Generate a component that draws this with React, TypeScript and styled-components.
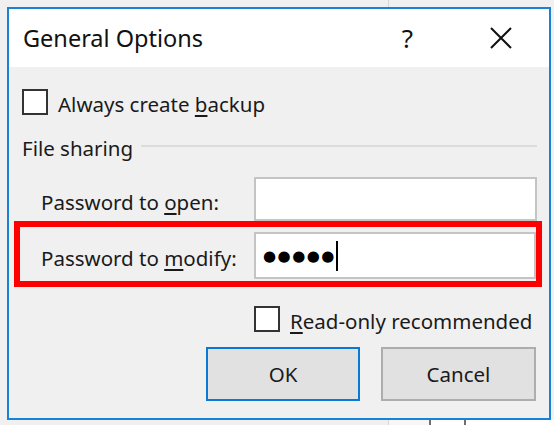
import styled, { createGlobalStyle } from 'styled-components';

const GlobalStyle = createGlobalStyle`
  html, body {
    margin: 0;
    padding: 0;
  }
  body {
    background: #f0f0f0;
    font-family: "Noto Sans", "Open Sans", sans-serif;
    color: #1a1a1a;
  }
`;

// the desktop behind the dialog, with bits of the app peeking out at the edges
const Desktop = styled.div`
  width: 554px;
  height: 425px;
  box-sizing: border-box;
  padding: 7px 3px 5px 7px;
  background-color: #f0f0f0;
  background-image:
    linear-gradient(to right, transparent 388px, #d6d6d6 388px, #d6d6d6 389px, transparent 389px),
    linear-gradient(to right, transparent 388px, #d6d6d6 388px, #d6d6d6 389px, #f7f7f7 389px, #f7f7f7 429px, #707070 429px, #707070 431px, #fff 431px, #fff 464px, #707070 464px, #707070 466px, #fff 466px);
  background-size: 100% 7px, 100% 5px;
  background-position: top left, bottom left;
  background-repeat: no-repeat;
`;

const Window = styled.div`
  width: 544px;
  height: 413px;
  box-sizing: border-box;
  border: 2px solid #1a82d6;
  background: #f0f0f0;
  display: flex;
  flex-direction: column;
`;

const TitleBar = styled.div`
  height: 58px;
  flex-shrink: 0;
  background: #fff;
  display: flex;
  align-items: center;
  padding-left: 14px;
`;

const Title = styled.div`
  flex: 1;
  font-size: 23.5px;
  color: #111;
`;

const HelpButton = styled.div`
  font-size: 26px;
  color: #111;
  margin-right: 77px;
`;

const CloseButton = styled.div`
  width: 22px;
  height: 22px;
  margin-right: 37px;
  display: flex;
  color: #111;
`;

const Body = styled.div`
  flex: 1;
  display: flex;
  flex-direction: column;
  padding-top: 22px;
`;

const CheckRow = styled.label<{ $indent: number; $top?: number }>`
  display: flex;
  align-items: center;
  gap: 10px;
  height: 26px;
  margin-left: ${(p) => p.$indent}px;
  margin-top: ${(p) => p.$top ?? 0}px;
  font-size: 20.5px;

  & > span:last-child {
    padding-top: 3px;
  }
`;

const Box = styled.span`
  width: 26px;
  height: 26px;
  box-sizing: border-box;
  border: 2px solid #333;
  background: #fff;
  flex-shrink: 0;
`;

const Key = styled.u`
  text-decoration-thickness: 2px;
  text-underline-offset: 3px;
`;

const GroupHeader = styled.div`
  display: flex;
  align-items: center;
  gap: 8px;
  height: 24px;
  margin: 21px 12px 0 13px;
  font-size: 20.5px;
`;

const GroupLine = styled.div`
  flex: 1;
  height: 2px;
  background: #dcdcdc;
  margin-bottom: 4px;
`;

const FieldRow = styled.div<{ $highlight?: boolean }>`
  display: flex;
  align-items: center;
  ${(p) =>
    p.$highlight
      ? `
    width: 528px;
    box-sizing: border-box;
    margin-left: 5px;
    border: 6px solid #ff0000;
    padding: 5px 0 2px 21px;
  `
      : `
    margin: 17px 0 0 32px;
  `}
`;

const FieldLabel = styled.div`
  width: 213px;
  font-size: 20.5px;
  padding-top: 5px;
`;

const TextBox = styled.div<{ $width: number; $height: number }>`
  width: ${(p) => p.$width}px;
  height: ${(p) => p.$height}px;
  box-sizing: border-box;
  border: 2px solid #c4c4c4;
  background: #fff;
  display: flex;
  align-items: center;
  padding-left: 7px;
`;

const Dots = styled.span`
  font-family: "DejaVu Sans", sans-serif;
  font-size: 15px;
  letter-spacing: 1.5px;
  color: #000;
`;

const Caret = styled.span`
  width: 2px;
  height: 30px;
  background: #000;
`;

const ButtonRow = styled.div`
  display: flex;
  justify-content: flex-end;
  gap: 21px;
  margin-top: 15px;
  padding-right: 13px;
`;

const Button = styled.button<{ $default?: boolean }>`
  width: ${(p) => (p.$default ? 154 : 155)}px;
  height: 54px;
  box-sizing: border-box;
  border: 2px solid ${(p) => (p.$default ? '#0a78d7' : '#adadad')};
  background: #e1e1e1;
  font-family: "Noto Sans", "Open Sans", sans-serif;
  font-size: 20.5px;
  color: #1a1a1a;
  padding: 0;
`;

export default function App() {
  return (
    <>
      <GlobalStyle />
      <Desktop>
        <Window>
          <TitleBar>
            <Title>General Options</Title>
            <HelpButton>?</HelpButton>
            <CloseButton>
              <svg width="22" height="22" viewBox="0 0 22 22">
                <path d="M1 1 L21 21 M21 1 L1 21" stroke="currentColor" strokeWidth="2" />
              </svg>
            </CloseButton>
          </TitleBar>
          <Body>
            <CheckRow $indent={13}>
              <Box />
              <span>
                Always create <Key>b</Key>ackup
              </span>
            </CheckRow>
            <GroupHeader>
              <span>File sharing</span>
              <GroupLine />
            </GroupHeader>
            <FieldRow>
              <FieldLabel>
                Password to <Key>o</Key>pen:
              </FieldLabel>
              <TextBox $width={283} $height={44} />
            </FieldRow>
            <FieldRow $highlight>
              <FieldLabel>
                Password to <Key>m</Key>odify:
              </FieldLabel>
              <TextBox $width={282} $height={47}>
                <Dots>●●●●●</Dots>
                <Caret />
              </TextBox>
            </FieldRow>
            <CheckRow $indent={245} $top={19}>
              <Box />
              <span>
                <Key>R</Key>ead-only recommended
              </span>
            </CheckRow>
            <ButtonRow>
              <Button $default>OK</Button>
              <Button>Cancel</Button>
            </ButtonRow>
          </Body>
        </Window>
      </Desktop>
    </>
  );
}
